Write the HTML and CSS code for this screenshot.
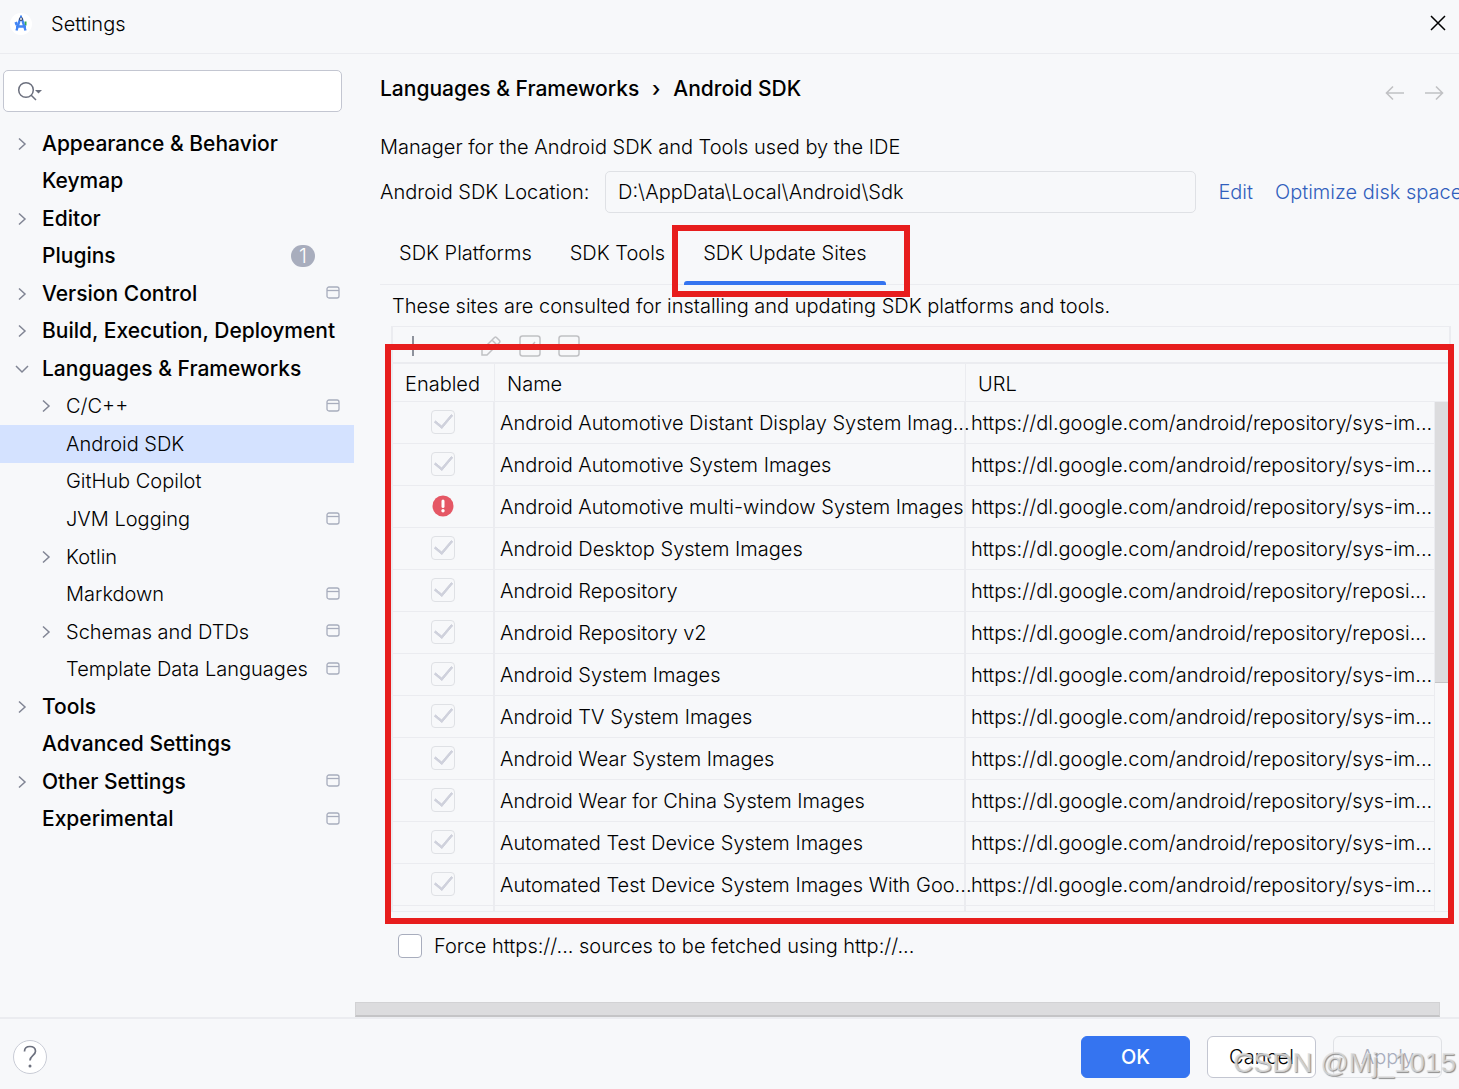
FILE: index.html
```html
<!DOCTYPE html>
<html lang="en">
<head>
    <meta charset="UTF-8">
    <meta name="viewport" content="width=device-width, initial-scale=1.0">
    <title>Settings</title>
    <link rel="stylesheet" href="styles.css">
</head>
<body>
    <!-- shared icons -->
    <svg class="sprite" width="0" height="0" aria-hidden="true">
        <symbol id="chevron" viewBox="0 0 16 16"><path d="M5 2.500l6 5.500-6 5.500" fill="none" stroke="#818594" stroke-width="1.500"/></symbol>
        <symbol id="chevron-down" viewBox="0 0 16 16"><path d="M2 5l6 6 6-6" fill="none" stroke="#818594" stroke-width="1.500"/></symbol>
        <symbol id="project" viewBox="0 0 14 13"><rect x="1" y="1" width="12" height="11" rx="2" fill="none" stroke="#a8adbd" stroke-width="1.300"/><path d="M1 4.500h12" stroke="#a8adbd" stroke-width="1.300"/></symbol>
    </svg>

    <header class="titlebar">
        <svg class="logo" width="22" height="22" viewBox="0 0 22 22">
            <circle cx="11" cy="11" r="11" fill="#fff"/>
            <path d="M14.500 8.500h2v4h-2z" fill="#34a853"/>
            <path d="M4.500 9.500l2.500-1 1 3-2.500 1z" fill="#4285f4"/>
            <path d="M10.200 5.500L6.500 17.500M11.800 5.500L15.500 17.500M6 13.500h10" fill="none" stroke="#4285f4" stroke-width="2.400"/>
            <circle cx="11" cy="6" r="1.500" fill="#fff" stroke="#3b4a6b" stroke-width="1.200"/>
            <path d="M11 2.500v2" stroke="#4285f4" stroke-width="2"/>
        </svg>
        <span class="title">Settings</span>
        <button class="close" aria-label="Close">
            <svg width="16" height="16" viewBox="0 0 16 16"><path d="M1 1l14 14M15 1L1 15" stroke="#000" stroke-width="1.500"/></svg>
        </button>
    </header>

    <div class="window">
        <aside class="sidebar">
            <div class="search">
                <svg width="26" height="20" viewBox="0 0 26 20">
                    <circle cx="9" cy="9" r="7.300" fill="none" stroke="#6c707e" stroke-width="1.500"/>
                    <path d="M14 14l5 5" stroke="#6c707e" stroke-width="1.500"/>
                    <path d="M18 9h7l-3.500 3.500z" fill="#6c707e"/>
                </svg>
                <input type="text" aria-label="Search settings">
            </div>
            <nav class="tree">
                <a href="#" class="item top"><svg class="arrow"><use href="#chevron"/></svg><span>Appearance &amp; Behavior</span></a>
                <a href="#" class="item top"><span>Keymap</span></a>
                <a href="#" class="item top"><svg class="arrow"><use href="#chevron"/></svg><span>Editor</span></a>
                <a href="#" class="item top"><span>Plugins</span><b class="badge">1</b></a>
                <a href="#" class="item top"><svg class="arrow"><use href="#chevron"/></svg><span>Version Control</span><svg class="project"><use href="#project"/></svg></a>
                <a href="#" class="item top"><svg class="arrow"><use href="#chevron"/></svg><span>Build, Execution, Deployment</span></a>
                <a href="#" class="item top"><svg class="arrow"><use href="#chevron-down"/></svg><span>Languages &amp; Frameworks</span></a>
                <a href="#" class="item child"><svg class="arrow"><use href="#chevron"/></svg><span>C/C++</span><svg class="project"><use href="#project"/></svg></a>
                <a href="#" class="item child selected"><span>Android SDK</span></a>
                <a href="#" class="item child"><span>GitHub Copilot</span></a>
                <a href="#" class="item child"><span>JVM Logging</span><svg class="project"><use href="#project"/></svg></a>
                <a href="#" class="item child"><svg class="arrow"><use href="#chevron"/></svg><span>Kotlin</span></a>
                <a href="#" class="item child"><span>Markdown</span><svg class="project"><use href="#project"/></svg></a>
                <a href="#" class="item child"><svg class="arrow"><use href="#chevron"/></svg><span>Schemas and DTDs</span><svg class="project"><use href="#project"/></svg></a>
                <a href="#" class="item child"><span>Template Data Languages</span><svg class="project"><use href="#project"/></svg></a>
                <a href="#" class="item top"><svg class="arrow"><use href="#chevron"/></svg><span>Tools</span></a>
                <a href="#" class="item top"><span>Advanced Settings</span></a>
                <a href="#" class="item top"><svg class="arrow"><use href="#chevron"/></svg><span>Other Settings</span><svg class="project"><use href="#project"/></svg></a>
                <a href="#" class="item top"><span>Experimental</span><svg class="project"><use href="#project"/></svg></a>
            </nav>
        </aside>

        <main class="content">
            <div class="crumbs">
                <span>Languages &amp; Frameworks</span>
                <span class="sep">›</span>
                <span>Android SDK</span>
                <div class="history">
                    <button aria-label="Back" disabled><svg width="20" height="16" viewBox="0 0 20 16"><path d="M19 8H2M8 1.500L1.500 8 8 14.500" fill="none" stroke="#c0c1c4" stroke-width="1.600"/></svg></button>
                    <button aria-label="Forward" disabled><svg width="20" height="16" viewBox="0 0 20 16"><path d="M1 8h17M12 1.500L18.500 8 12 14.500" fill="none" stroke="#c0c1c4" stroke-width="1.600"/></svg></button>
                </div>
            </div>
            <p class="intro">Manager for the Android SDK and Tools used by the IDE</p>
            <div class="location">
                <label for="sdkLocation">Android SDK Location:</label>
                <input type="text" id="sdkLocation" value="D:\AppData\Local\Android\Sdk" readonly>
                <a href="#">Edit</a>
                <a href="#">Optimize disk space</a>
            </div>

            <div class="tabs" role="tablist">
                <button role="tab">SDK Platforms</button>
                <button role="tab">SDK Tools</button>
                <button role="tab" class="active" aria-selected="true">SDK Update Sites<i class="mark mark-tab"></i></button>
            </div>

            <p class="hint">These sites are consulted for installing and updating SDK platforms and tools.</p>

            <div class="panel">
                <div class="toolbar">
                    <button aria-label="Add"><svg width="20" height="20" viewBox="0 0 20 20"><path d="M10 0v20M0 10h20" stroke="#6c707e" stroke-width="1.500"/></svg></button>
                    <button aria-label="Remove" disabled><svg width="20" height="20" viewBox="0 0 20 20"><path d="M1 10h18" stroke="#c0c1c4" stroke-width="1.500"/></svg></button>
                    <button aria-label="Edit" disabled><svg width="20" height="20" viewBox="0 0 20 20"><path d="M1 19v-5L13.500 1.500q1-.8 2 0l3 3q.8 1 0 2L6 19zM11 4l5 5" fill="none" stroke="#c0c1c4" stroke-width="1.500"/></svg></button>
                    <button aria-label="Select all" disabled><svg width="22" height="22" viewBox="0 0 22 22"><rect x="1" y="1" width="20" height="20" rx="2.500" fill="none" stroke="#c0c1c4" stroke-width="1.500"/><path d="M7 11l3 3 6-7" fill="none" stroke="#c0c1c4" stroke-width="1.500"/></svg></button>
                    <button aria-label="Deselect all" disabled><svg width="22" height="22" viewBox="0 0 22 22"><rect x="1" y="1" width="20" height="20" rx="2.500" fill="none" stroke="#c0c1c4" stroke-width="1.500"/></svg></button>
                </div>
                <div class="scroller">
                    <table>
                        <colgroup><col class="col-enabled"><col class="col-name"><col><col class="col-bar"></colgroup>
                        <thead>
                            <tr><th>Enabled</th><th>Name</th><th>URL</th><th></th></tr>
                        </thead>
                        <tbody>
                            <tr><td><input type="checkbox" aria-label="Enabled" checked disabled></td><td>Android Automotive Distant Display System Imag...</td><td>https://dl.google.com/android/repository/sys-im...</td></tr>
                            <tr><td><input type="checkbox" aria-label="Enabled" checked disabled></td><td>Android Automotive System Images</td><td>https://dl.google.com/android/repository/sys-im...</td></tr>
                            <tr><td><svg class="error" viewBox="0 0 22 22"><circle cx="11" cy="11" r="10.500" fill="#e55765"/><path d="M11 6v5.500" stroke="#fff" stroke-width="3" stroke-linecap="round"/><circle cx="11" cy="15.800" r="1.700" fill="#fff"/></svg></td><td>Android Automotive multi-window System Images</td><td>https://dl.google.com/android/repository/sys-im...</td></tr>
                            <tr><td><input type="checkbox" aria-label="Enabled" checked disabled></td><td>Android Desktop System Images</td><td>https://dl.google.com/android/repository/sys-im...</td></tr>
                            <tr><td><input type="checkbox" aria-label="Enabled" checked disabled></td><td>Android Repository</td><td>https://dl.google.com/android/repository/reposi...</td></tr>
                            <tr><td><input type="checkbox" aria-label="Enabled" checked disabled></td><td>Android Repository v2</td><td>https://dl.google.com/android/repository/reposi...</td></tr>
                            <tr><td><input type="checkbox" aria-label="Enabled" checked disabled></td><td>Android System Images</td><td>https://dl.google.com/android/repository/sys-im...</td></tr>
                            <tr><td><input type="checkbox" aria-label="Enabled" checked disabled></td><td>Android TV System Images</td><td>https://dl.google.com/android/repository/sys-im...</td></tr>
                            <tr><td><input type="checkbox" aria-label="Enabled" checked disabled></td><td>Android Wear System Images</td><td>https://dl.google.com/android/repository/sys-im...</td></tr>
                            <tr><td><input type="checkbox" aria-label="Enabled" checked disabled></td><td>Android Wear for China System Images</td><td>https://dl.google.com/android/repository/sys-im...</td></tr>
                            <tr><td><input type="checkbox" aria-label="Enabled" checked disabled></td><td>Automated Test Device System Images</td><td>https://dl.google.com/android/repository/sys-im...</td></tr>
                            <tr><td><input type="checkbox" aria-label="Enabled" checked disabled></td><td>Automated Test Device System Images With Goo...</td><td>https://dl.google.com/android/repository/sys-im...</td></tr>
                            <tr class="stub"><td></td><td></td><td></td></tr>
                        </tbody>
                    </table>
                    <i class="thumb"></i>
                </div>
                <i class="mark mark-table"></i>
            </div>

            <div class="force">
                <input type="checkbox" id="forceHttp">
                <label for="forceHttp">Force https://... sources to be fetched using http://...</label>
            </div>
            <div class="hbar"></div>
        </main>
    </div>

    <footer class="footer">
        <button class="help" aria-label="Help">
            <svg width="14" height="24" viewBox="0 0 14 24"><path d="M1.500 6.500C1.500 3 4 1.500 7 1.500s5.500 1.700 5.500 4.800c0 4-5.500 4.200-5.500 9.200" fill="none" stroke="#6c707e" stroke-width="1.700"/><circle cx="7" cy="21" r="1.500" fill="#6c707e"/></svg>
        </button>
        <button class="btn primary">OK</button>
        <button class="btn">Cancel</button>
        <button class="btn" disabled>Apply</button>
        <span class="watermark">CSDN @Mj_1015</span>
    </footer>
</body>
</html>
```

FILE: styles.css
```css
* {
    box-sizing: border-box;
}

body {
    margin: 0;
    height: 100vh;
    display: flex;
    flex-direction: column;
    overflow: hidden;
    background-color: #f7f8fa;
    color: #000;
    font-family: Inter, sans-serif;
    font-size: 20px;
    font-weight: 300;
    line-height: 24px;
}

p {
    margin: 0;
}

button, input {
    font: inherit;
    color: inherit;
}

button {
    padding: 0;
    border: none;
    background: none;
}

a {
    color: #315fbd;
    text-decoration: none;
}

svg {
    display: block;
    flex: none;
}

.sprite {
    position: absolute;
}

/* title bar */
.titlebar {
    display: flex;
    align-items: center;
    height: 54px;
    padding: 0 13px 6px 10px;
    border-bottom: 1px solid #ebecf0;
}

.title {
    margin-left: 19px;
}

.close {
    margin-left: auto;
    margin-bottom: 2px;
}

.window {
    flex: 1;
    display: flex;
    min-height: 0;
}

/* left tree */
.sidebar {
    flex: none;
    width: 354px;
    padding-top: 16px;
}

.search {
    display: flex;
    align-items: center;
    height: 42px;
    margin: 0 12px 13px 3px;
    padding-left: 13px;
    border: 1px solid #c3c6d1;
    border-radius: 5px;
    background-color: #fff;
}

.search input {
    flex: 1;
    min-width: 0;
    border: none;
    outline: none;
    background: none;
}

.tree {
    display: grid;
    grid-auto-rows: 1fr;
    height: 713px;
}

.item {
    display: flex;
    align-items: center;
    padding: 0 14px 0 42px;
    color: #000;
    white-space: nowrap;
}

.top {
    font-size: 21px;
    font-weight: 500;
}

.child {
    padding-left: 66px;
}

.selected {
    background-color: #d4e2ff;
}

.arrow {
    width: 16px;
    height: 16px;
    margin-left: -28px;
    margin-right: 12px;
}

.project {
    width: 14px;
    height: 13px;
    margin-left: auto;
    margin-bottom: 2px;
}

.badge {
    width: 24px;
    height: 22px;
    margin-left: auto;
    margin-right: 25px;
    border-radius: 11px;
    background-color: #a8adbd;
    color: #fff;
    font-size: 20px;
    font-weight: 300;
    line-height: 22px;
    text-align: center;
}

/* right side */
.content {
    position: relative;
    flex: 1;
    min-width: 0;
    padding: 23px 0 0 26px;
    overflow: hidden;
}

.crumbs {
    display: flex;
    margin-bottom: 34px;
    font-size: 21px;
    font-weight: 500;
}

.sep {
    width: 34px;
    text-align: center;
}

.history {
    display: flex;
    gap: 19px;
    margin-left: auto;
    margin-right: 15px;
    padding-top: 7px;
}

.location {
    display: flex;
    align-items: center;
    margin-top: 12px;
    white-space: nowrap;
}

.location label {
    flex: none;
    width: 225px;
}

.location input {
    flex: 1;
    min-width: 0;
    height: 42px;
    padding: 0 12px;
    border: 1px solid #dfe1e5;
    border-radius: 5px;
    background: none;
}

.location a {
    margin-left: 22px;
}

.location a:last-child {
    width: 184px;
}

.tabs {
    display: flex;
    margin-top: 10px;
    border-bottom: 1px solid #ebecf0;
}

.tabs button {
    position: relative;
    height: 61px;
    padding: 0 19px 1px;
}

.tabs .active::after {
    content: "";
    position: absolute;
    left: 0;
    right: 0;
    bottom: -1px;
    height: 4px;
    border-radius: 3px 3px 0 0;
    background-color: #3574f0;
}

.hint {
    margin: 9px 0 8px 12px;
}

/* red frames drawn over the dialog */
.mark {
    position: absolute;
    border: 6px solid #e71d1d;
    pointer-events: none;
    z-index: 1;
}

.mark-tab {
    inset: 2px -24px -13px -12px;
}

.mark-table {
    inset: 17px -5px -13px -8px;
}

.panel {
    position: relative;
    margin: 0 8px 0 11px;
    border: 1px solid #ebecf0;
    border-width: 1px 2px;
}

.toolbar {
    display: flex;
    align-items: center;
    height: 36px;
    padding-top: 2px;
    border-bottom: 1px solid #ebecf0;
}

.toolbar button {
    display: flex;
    justify-content: center;
    width: 39px;
}

.scroller {
    position: relative;
}

table {
    width: 100%;
    table-layout: fixed;
    border-collapse: separate;
    border-spacing: 0;
}

.col-enabled {
    width: 102px;
}

.col-name {
    width: 471px;
}

.col-bar {
    width: 14px;
}

th {
    height: 39px;
    padding: 2px 12px 0;
    border-top: 1px solid #ebecf0;
    border-bottom: 1px solid #ebecf0;
    font-weight: 300;
    text-align: left;
}

th:nth-child(-n+2) {
    border-right: 1px solid #ebecf0;
}

td {
    height: 42px;
    padding: 0 0 0 5px;
    border-right: 2px solid #ebecf0;
    border-bottom: 1px solid #ebecf0;
    white-space: nowrap;
}

td:first-child {
    padding: 0 0 2px;
}

td:last-child {
    border-right-width: 1px;
}

.stub td, .stub td:first-child {
    height: 5px;
    padding: 0;
    border-bottom: none;
}

input[type="checkbox"] {
    appearance: none;
    display: grid;
    place-items: center;
    width: 24px;
    height: 24px;
    margin: 0 auto;
    border: 1px solid #a8adbd;
    border-radius: 4px;
    background-color: #fff;
}

input[type="checkbox"]:disabled {
    border-color: #dfe1e5;
    background: none;
}

input[type="checkbox"]:checked::after {
    content: "";
    width: 8px;
    height: 15px;
    border: solid #cfd1dc;
    border-width: 0 3px 3px 0;
    border-radius: 1px;
    transform: translateY(-3px) rotate(40deg);
}

.error {
    width: 22px;
    height: 22px;
    margin: 0 auto;
}

.thumb {
    position: absolute;
    top: 39px;
    right: 0;
    width: 14px;
    height: 281px;
    background-color: #dcdcde;
    border-bottom: 1px solid #c4c4c6;
}

.force {
    display: flex;
    align-items: center;
    gap: 12px;
    margin: 22px 0 0 18px;
}

.force input[type="checkbox"] {
    margin: 0;
}

.hbar {
    position: absolute;
    left: 1px;
    right: 19px;
    bottom: 0;
    height: 15px;
    border: 1px solid #d2d2d4;
    border-bottom: 2px solid #c4c4c6;
    background-color: #dcdcde;
}

/* bottom buttons */
.footer {
    position: relative;
    flex: none;
    display: flex;
    align-items: center;
    gap: 17px;
    height: 72px;
    padding: 6px 17px 0 13px;
    border-top: 2px solid #ebecf0;
}

.help {
    display: flex;
    align-items: center;
    justify-content: center;
    width: 34px;
    height: 34px;
    margin-right: auto;
    border: 1px solid #c9ccd6;
    border-radius: 50%;
    background-color: #fff;
}

.btn {
    width: 109px;
    height: 42px;
    border: 1px solid #c3c6d1;
    border-radius: 6px;
    background-color: #fff;
}

.primary {
    border-color: #3574f0;
    background-color: #3574f0;
    color: #fff;
    font-weight: 500;
}

.btn:disabled {
    border-color: #dfe1e5;
    background: none;
    color: #a8adbd;
}

.watermark {
    position: absolute;
    right: 3px;
    bottom: 8px;
    color: rgba(222, 222, 222, 0.8);
    font-family: "Liberation Sans", sans-serif;
    font-size: 28px;
    font-weight: 400;
    line-height: 36px;
    text-shadow: 1px 1px 1px #8c8c8c;
}
```
